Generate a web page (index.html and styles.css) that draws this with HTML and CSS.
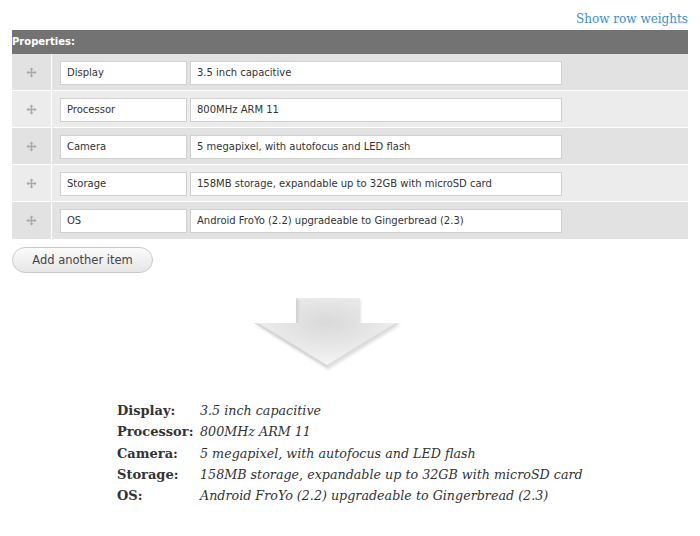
FILE: index.html
```html
<!DOCTYPE html>
<html>
<head>
<meta charset="utf-8">
<link rel="stylesheet" href="styles.css">
</head>
<body>
<div class="page">
  <div class="toolbar"><a class="weights" href="#">Show row weights</a></div>
  <div class="props">
    <div class="props-head">Properties:</div>
    <div class="row odd">
      <div class="handle"><svg width="11" height="11" viewBox="0 0 11 11"><path d="M5.5 0.5 L7.5 2.5 H6.2 V4.8 H8.5 V3.5 L10.5 5.5 L8.5 7.5 V6.2 H6.2 V8.5 H7.5 L5.5 10.5 L3.5 8.5 H4.8 V6.2 H2.5 V7.5 L0.5 5.5 L2.5 3.5 V4.8 H4.8 V2.5 H3.5 Z" fill="#a8a8a8"/></svg></div>
      <div class="fields"><div class="input key">Display</div><div class="input val">3.5 inch capacitive</div></div>
    </div>
    <div class="row even">
      <div class="handle"><svg width="11" height="11" viewBox="0 0 11 11"><path d="M5.5 0.5 L7.5 2.5 H6.2 V4.8 H8.5 V3.5 L10.5 5.5 L8.5 7.5 V6.2 H6.2 V8.5 H7.5 L5.5 10.5 L3.5 8.5 H4.8 V6.2 H2.5 V7.5 L0.5 5.5 L2.5 3.5 V4.8 H4.8 V2.5 H3.5 Z" fill="#a8a8a8"/></svg></div>
      <div class="fields"><div class="input key">Processor</div><div class="input val">800MHz ARM 11</div></div>
    </div>
    <div class="row odd">
      <div class="handle"><svg width="11" height="11" viewBox="0 0 11 11"><path d="M5.5 0.5 L7.5 2.5 H6.2 V4.8 H8.5 V3.5 L10.5 5.5 L8.5 7.5 V6.2 H6.2 V8.5 H7.5 L5.5 10.5 L3.5 8.5 H4.8 V6.2 H2.5 V7.5 L0.5 5.5 L2.5 3.5 V4.8 H4.8 V2.5 H3.5 Z" fill="#a8a8a8"/></svg></div>
      <div class="fields"><div class="input key">Camera</div><div class="input val">5 megapixel, with autofocus and LED flash</div></div>
    </div>
    <div class="row even">
      <div class="handle"><svg width="11" height="11" viewBox="0 0 11 11"><path d="M5.5 0.5 L7.5 2.5 H6.2 V4.8 H8.5 V3.5 L10.5 5.5 L8.5 7.5 V6.2 H6.2 V8.5 H7.5 L5.5 10.5 L3.5 8.5 H4.8 V6.2 H2.5 V7.5 L0.5 5.5 L2.5 3.5 V4.8 H4.8 V2.5 H3.5 Z" fill="#a8a8a8"/></svg></div>
      <div class="fields"><div class="input key">Storage</div><div class="input val">158MB storage, expandable up to 32GB with microSD card</div></div>
    </div>
    <div class="row odd">
      <div class="handle"><svg width="11" height="11" viewBox="0 0 11 11"><path d="M5.5 0.5 L7.5 2.5 H6.2 V4.8 H8.5 V3.5 L10.5 5.5 L8.5 7.5 V6.2 H6.2 V8.5 H7.5 L5.5 10.5 L3.5 8.5 H4.8 V6.2 H2.5 V7.5 L0.5 5.5 L2.5 3.5 V4.8 H4.8 V2.5 H3.5 Z" fill="#a8a8a8"/></svg></div>
      <div class="fields"><div class="input key">OS</div><div class="input val">Android FroYo (2.2) upgradeable to Gingerbread (2.3)</div></div>
    </div>
  </div>
  <button class="add-btn" type="button">Add another item</button>
  <div class="arrow-wrap">
    <svg class="arrow" width="150" height="76" viewBox="0 0 150 76">
      <defs>
        <radialGradient id="ag" cx="0.5" cy="0.35" r="0.6">
          <stop offset="0" stop-color="#d9d9d9"/>
          <stop offset="0.6" stop-color="#e8e8e8"/>
          <stop offset="1" stop-color="#f4f4f4"/>
        </radialGradient>
        <linearGradient id="side" x1="0" y1="0" x2="1" y2="0">
          <stop offset="0" stop-color="#cfcfcf"/>
          <stop offset="1" stop-color="#e6e6e6"/>
        </linearGradient>
        <filter id="blur" x="-10%" y="-10%" width="120%" height="130%"><feGaussianBlur stdDeviation="1"/></filter>
      </defs>
      <polygon points="43,3 107,3 107,28 147,28 74,73 1,28 43,28" fill="#cccccc" filter="url(#blur)" opacity="0.5"/>
      <polygon points="42,1 106,1 106,26 146,26 73,71 0,26 42,26" fill="url(#ag)"/>
      <polygon points="42,1 47,4 47,26 42,26" fill="url(#side)"/>
      <polygon points="0,26 73,71 73,68 6,27" fill="#cdcdcd" opacity="0.7"/>
      <polygon points="146,26 73,71 73,68 140,27" fill="#d4d4d4" opacity="0.7"/>
    </svg>
  </div>
  <dl class="specs">
    <dt>Display:</dt><dd>3.5 inch capacitive</dd>
    <dt>Processor:</dt><dd>800MHz ARM 11</dd>
    <dt>Camera:</dt><dd>5 megapixel, with autofocus and LED flash</dd>
    <dt>Storage:</dt><dd>158MB storage, expandable up to 32GB with microSD card</dd>
    <dt>OS:</dt><dd>Android FroYo (2.2) upgradeable to Gingerbread (2.3)</dd>
  </dl>
</div>
</body>
</html>
```
FILE: styles.css
```css
html, body {
  margin: 0;
  padding: 0;
  background: #ffffff;
}
.page {
  padding: 0 12px;
  font-family: "DejaVu Sans", sans-serif;
}
.toolbar {
  height: 30px;
  display: flex;
  justify-content: flex-end;
  align-items: flex-end;
}
.weights {
  font-family: "DejaVu Serif", serif;
  font-size: 12px;
  line-height: 16px;
  color: #3b8fc9;
  text-decoration: none;
  padding-bottom: 3px;
}
.props-head {
  background: #737373;
  color: #ffffff;
  font-weight: bold;
  font-size: 10px;
  height: 24px;
  line-height: 24px;
}
.row {
  display: flex;
  height: 37px;
  border-bottom: 1px solid #ffffff;
  box-sizing: border-box;
}
.row:last-child {
  border-bottom: none;
  height: 37px;
}
.odd { background: #e2e2e2; }
.even { background: #ececec; }
.handle {
  width: 40px;
  border-right: 1px solid #ffffff;
  display: flex;
  align-items: center;
  justify-content: center;
  box-sizing: border-box;
}
.fields {
  display: flex;
  gap: 3px;
  padding: 7px 0 0 8px;
}
.input {
  background: #ffffff;
  border: 1px solid #cfcfcf;
  height: 24px;
  box-sizing: border-box;
  font-size: 10px;
  line-height: 22px;
  color: #333333;
  padding-left: 6px;
  white-space: nowrap;
  overflow: hidden;
}
.key { width: 127px; }
.val { width: 372px; }
.add-btn {
  display: block;
  margin-top: 8px;
  width: 141px;
  height: 26px;
  border: 1px solid #c9c9c9;
  border-radius: 13px;
  background: linear-gradient(#fbfbfb, #e6e6e6);
  font-family: "DejaVu Sans", sans-serif;
  font-size: 11.5px;
  color: #444444;
  padding: 0;
}
.arrow-wrap {
  margin-top: 24px;
  padding-left: 242px;
  height: 76px;
}
.arrow { display: block; }
.specs {
  margin: 27px 0 0 105px;
  display: grid;
  grid-template-columns: 83px auto;
  row-gap: 0;
  font-family: "DejaVu Serif", serif;
  font-size: 13px;
  line-height: 21.3px;
  color: #333333;
}
.specs dt {
  font-weight: bold;
}
.specs dd {
  margin: 0;
  font-style: italic;
  font-size: 12.7px;
}
```
